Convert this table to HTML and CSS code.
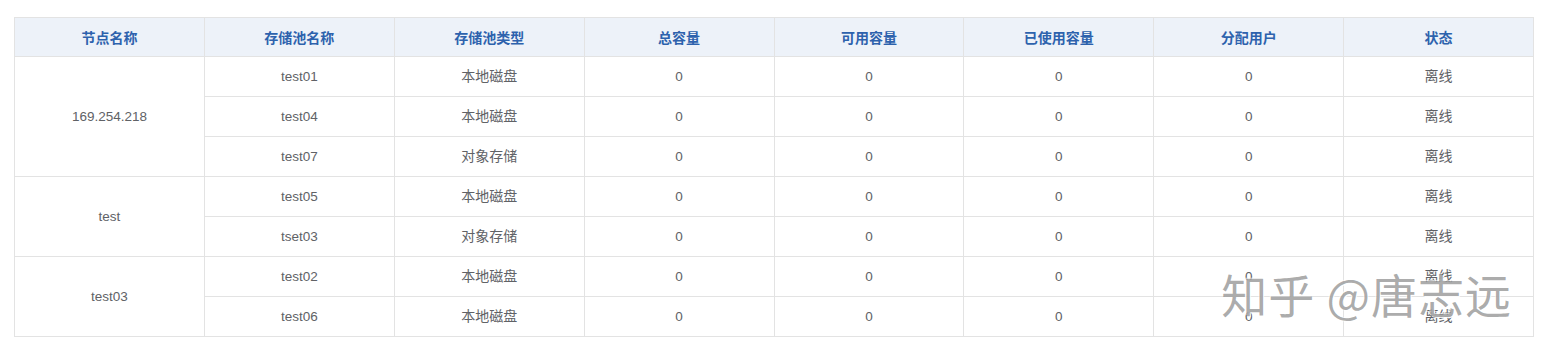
FILE: index.html
```html
<!DOCTYPE html>
<html lang="zh">
<head>
<meta charset="utf-8">
<link rel="stylesheet" href="styles.css">
</head>
<body>
<div class="wrap">
<table class="grid">
<thead>
<tr><th>节点名称</th><th>存储池名称</th><th>存储池类型</th><th>总容量</th><th>可用容量</th><th>已使用容量</th><th>分配用户</th><th>状态</th></tr>
</thead>
<tbody>
<tr><td rowspan="3">169.254.218</td><td>test01</td><td class="zh">本地磁盘</td><td>0</td><td>0</td><td>0</td><td>0</td><td class="zh">离线</td></tr>
<tr><td>test04</td><td class="zh">本地磁盘</td><td>0</td><td>0</td><td>0</td><td>0</td><td class="zh">离线</td></tr>
<tr><td>test07</td><td class="zh">对象存储</td><td>0</td><td>0</td><td>0</td><td>0</td><td class="zh">离线</td></tr>
<tr><td rowspan="2">test</td><td>test05</td><td class="zh">本地磁盘</td><td>0</td><td>0</td><td>0</td><td>0</td><td class="zh">离线</td></tr>
<tr><td>tset03</td><td class="zh">对象存储</td><td>0</td><td>0</td><td>0</td><td>0</td><td class="zh">离线</td></tr>
<tr><td rowspan="2">test03</td><td>test02</td><td class="zh">本地磁盘</td><td>0</td><td>0</td><td>0</td><td>0</td><td class="zh">离线</td></tr>
<tr><td>test06</td><td class="zh">本地磁盘</td><td>0</td><td>0</td><td>0</td><td>0</td><td class="zh">离线</td></tr>
</tbody>
</table>
<div class="watermark">知乎 @唐志远</div>
</div>
</body>
</html>
```

FILE: styles.css
```css
html, body {
  margin: 0;
  padding: 0;
  background: #ffffff;
}
body {
  padding: 17px 14px 0 14px;
  font-family: "Liberation Sans", Arial, "Noto Sans CJK SC", sans-serif;
  font-size: 13.5px;
  color: #606266;
}
.wrap {
  position: relative;
}
.grid {
  width: 1520px;
  border-collapse: collapse;
  table-layout: fixed;
}
.grid th, .grid td {
  border: 1px solid #e3e3e3;
  text-align: center;
  vertical-align: middle;
  padding: 0;
  line-height: 16px;
}
.grid th {
  height: 38px;
  background: #edf2f9;
  color: #2d62ad;
  font-weight: bold;
  font-size: 14px;
  font-family: "Noto Sans CJK SC", sans-serif;
}
.grid td {
  height: 39px;
}
.grid td.zh {
  font-size: 14px;
  font-family: "Noto Sans CJK SC", sans-serif;
  padding-bottom: 3px;
  height: 36px;
}
.watermark {
  position: absolute;
  right: 22px;
  bottom: 19px;
  font-family: "Noto Sans CJK SC", sans-serif;
  font-size: 46px;
  line-height: 50px;
  letter-spacing: 1px;
  color: rgba(100, 100, 100, 0.55);
  text-shadow: 1px 1px 0 rgba(255, 255, 255, 0.9), -1px -1px 0 rgba(255, 255, 255, 0.6);
  white-space: nowrap;
  pointer-events: none;
}
```
